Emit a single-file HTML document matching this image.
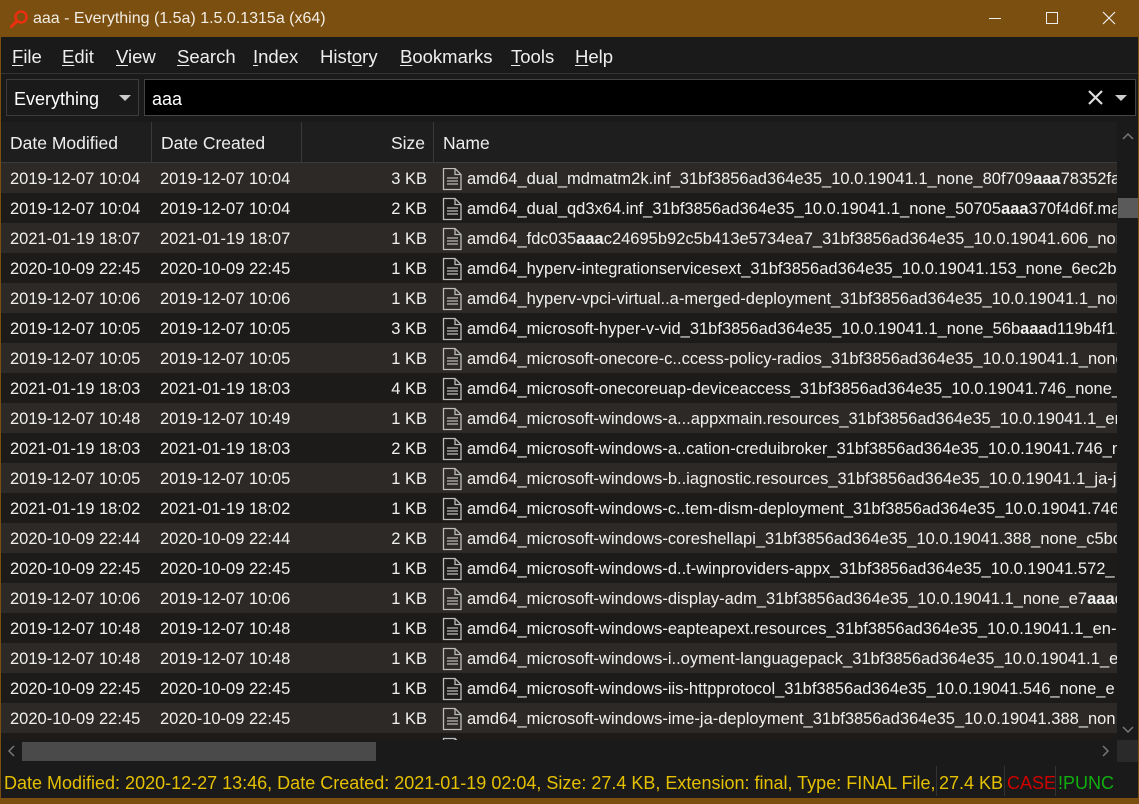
<!DOCTYPE html>
<html><head><meta charset="utf-8"><style>
*{margin:0;padding:0;box-sizing:border-box}
body{width:1139px;height:800px;background:#7a4f10;font-family:"Liberation Sans",sans-serif;color:#fff;overflow:hidden;position:relative}
.abs{position:absolute}
#title{left:0;top:0;width:1139px;height:37px;background:#7a4f10;font-size:16px;color:#f2ede4}
#menu{left:1px;top:37px;width:1137px;height:36px;background:#1a1a1a;font-size:18.5px;color:#eee}
#menu span{position:absolute;top:9px}
#menu u{text-decoration:underline;text-underline-offset:2px}
#bar{left:1px;top:73px;width:1137px;height:49px;background:#1a1a1a;border-top:1px solid #333}
#hdr{left:1px;top:122px;width:1116px;height:41px;background:#1e1e1e;font-size:17.5px;color:#eee;border-bottom:1px solid #3a3a3a}
#hdr div{position:absolute;top:0;height:40px;line-height:43px;border-right:1px solid #3a3a3a}
#list{left:1px;top:163px;width:1116px;height:577px;overflow:hidden;background:#1d1b19}
.r{position:relative;height:30px;font-size:16.5px;line-height:33px;white-space:nowrap;color:#f0f0f0}
.r:nth-child(odd){background:#2c2926}
.r span{position:absolute;top:0}
.c1{left:9px}.c2{left:159px}.c3{right:690px;text-align:right}
.c4{left:466px;width:650px;overflow:hidden}
#vs{left:1117px;top:122px;width:21px;height:618px;background:#1a1a1a}
#hs{left:1px;top:740px;width:1116px;height:22px;background:#1a1a1a}
#corner{left:1117px;top:740px;width:21px;height:22px;background:#2a2a2a}
#status{left:1px;top:762px;width:1137px;height:36px;background:#1a1a1a;font-size:18px;color:#e5c000;line-height:42px;white-space:nowrap}
</style></head><body>
<div id="title" class="abs">
<svg class="abs" style="left:9px;top:9px" width="20" height="20" viewBox="0 0 20 20"><circle cx="12" cy="8" r="5.5" fill="none" stroke="#e83010" stroke-width="2.6"/><path d="M8 12 L2.5 17.5" stroke="#e83010" stroke-width="3.2" stroke-linecap="round"/></svg>
<span class="abs" style="left:33px;top:10px">aaa - Everything (1.5a) 1.5.0.1315a (x64)</span>
<div class="abs" style="left:989px;top:18px;width:12px;height:1px;background:#eee"></div>
<div class="abs" style="left:1046px;top:12px;width:12px;height:12px;border:1px solid #eee"></div>
<svg class="abs" style="left:1102px;top:11px" width="14" height="14"><path d="M1 1L13 13M13 1L1 13" stroke="#eee" stroke-width="1.2"/></svg>
</div>
<div id="menu" class="abs">
<span style="left:11px"><u>F</u>ile</span><span style="left:61px"><u>E</u>dit</span><span style="left:115px"><u>V</u>iew</span><span style="left:176px"><u>S</u>earch</span><span style="left:252px"><u>I</u>ndex</span><span style="left:319px">Hist<u>o</u>ry</span><span style="left:399px"><u>B</u>ookmarks</span><span style="left:510px"><u>T</u>ools</span><span style="left:574px"><u>H</u>elp</span>
</div>
<div id="bar" class="abs">
<div class="abs" style="left:5px;top:5px;width:133px;height:37px;border:1px solid #3c3c3c;background:#1a1a1a;font-size:18px;line-height:38px;padding-left:7px">Everything</div>
<div class="abs" style="left:118px;top:21px;width:0;height:0;border-left:6px solid transparent;border-right:6px solid transparent;border-top:6px solid #ccc"></div>
<div class="abs" style="left:143px;top:5px;width:992px;height:37px;border:1px solid #444;background:#000;font-size:18px;line-height:38px;padding-left:7px">aaa</div>
<svg class="abs" style="left:1087px;top:16px" width="15" height="15"><path d="M1 1L14 14M14 1L1 14" stroke="#ddd" stroke-width="2.2"/></svg>
<div class="abs" style="left:1114px;top:21px;width:0;height:0;border-left:6px solid transparent;border-right:6px solid transparent;border-top:6px solid #ccc"></div>
</div>
<div id="hdr" class="abs">
<div style="left:0;width:151px;padding-left:9px">Date Modified</div>
<div style="left:151px;width:150px;padding-left:9px">Date Created</div>
<div style="left:301px;width:132px;text-align:right;padding-right:8px">Size</div>
<div style="left:433px;width:683px;padding-left:9px;border-right:none">Name</div>
</div>
<div id="list" class="abs">
<div class="r"><span class="c1">2019-12-07 10:04</span><span class="c2">2019-12-07 10:04</span><span class="c3">3 KB</span><span class="c4">amd64_dual_mdmatm2k.inf_31bf3856ad364e35_10.0.19041.1_none_80f709<b>aaa</b>78352fa.inf</span></div>
<div class="r"><span class="c1">2019-12-07 10:04</span><span class="c2">2019-12-07 10:04</span><span class="c3">2 KB</span><span class="c4">amd64_dual_qd3x64.inf_31bf3856ad364e35_10.0.19041.1_none_50705<b>aaa</b>370f4d6f.manifest</span></div>
<div class="r"><span class="c1">2021-01-19 18:07</span><span class="c2">2021-01-19 18:07</span><span class="c3">1 KB</span><span class="c4">amd64_fdc035<b>aaa</b>c24695b92c5b413e5734ea7_31bf3856ad364e35_10.0.19041.606_none_x</span></div>
<div class="r"><span class="c1">2020-10-09 22:45</span><span class="c2">2020-10-09 22:45</span><span class="c3">1 KB</span><span class="c4">amd64_hyperv-integrationservicesext_31bf3856ad364e35_10.0.19041.153_none_6ec2ba</span></div>
<div class="r"><span class="c1">2019-12-07 10:06</span><span class="c2">2019-12-07 10:06</span><span class="c3">1 KB</span><span class="c4">amd64_hyperv-vpci-virtual..a-merged-deployment_31bf3856ad364e35_10.0.19041.1_none</span></div>
<div class="r"><span class="c1">2019-12-07 10:05</span><span class="c2">2019-12-07 10:05</span><span class="c3">3 KB</span><span class="c4">amd64_microsoft-hyper-v-vid_31bf3856ad364e35_10.0.19041.1_none_56b<b>aaa</b>d119b4f1.m</span></div>
<div class="r"><span class="c1">2019-12-07 10:05</span><span class="c2">2019-12-07 10:05</span><span class="c3">1 KB</span><span class="c4">amd64_microsoft-onecore-c..ccess-policy-radios_31bf3856ad364e35_10.0.19041.1_none</span></div>
<div class="r"><span class="c1">2021-01-19 18:03</span><span class="c2">2021-01-19 18:03</span><span class="c3">4 KB</span><span class="c4">amd64_microsoft-onecoreuap-deviceaccess_31bf3856ad364e35_10.0.19041.746_none_</span></div>
<div class="r"><span class="c1">2019-12-07 10:48</span><span class="c2">2019-12-07 10:49</span><span class="c3">1 KB</span><span class="c4">amd64_microsoft-windows-a...appxmain.resources_31bf3856ad364e35_10.0.19041.1_en</span></div>
<div class="r"><span class="c1">2021-01-19 18:03</span><span class="c2">2021-01-19 18:03</span><span class="c3">2 KB</span><span class="c4">amd64_microsoft-windows-a..cation-creduibroker_31bf3856ad364e35_10.0.19041.746_n</span></div>
<div class="r"><span class="c1">2019-12-07 10:05</span><span class="c2">2019-12-07 10:05</span><span class="c3">1 KB</span><span class="c4">amd64_microsoft-windows-b..iagnostic.resources_31bf3856ad364e35_10.0.19041.1_ja-jp</span></div>
<div class="r"><span class="c1">2021-01-19 18:02</span><span class="c2">2021-01-19 18:02</span><span class="c3">1 KB</span><span class="c4">amd64_microsoft-windows-c..tem-dism-deployment_31bf3856ad364e35_10.0.19041.746</span></div>
<div class="r"><span class="c1">2020-10-09 22:44</span><span class="c2">2020-10-09 22:44</span><span class="c3">2 KB</span><span class="c4">amd64_microsoft-windows-coreshellapi_31bf3856ad364e35_10.0.19041.388_none_c5bc</span></div>
<div class="r"><span class="c1">2020-10-09 22:45</span><span class="c2">2020-10-09 22:45</span><span class="c3">1 KB</span><span class="c4">amd64_microsoft-windows-d..t-winproviders-appx_31bf3856ad364e35_10.0.19041.572_</span></div>
<div class="r"><span class="c1">2019-12-07 10:06</span><span class="c2">2019-12-07 10:06</span><span class="c3">1 KB</span><span class="c4">amd64_microsoft-windows-display-adm_31bf3856ad364e35_10.0.19041.1_none_e7<b>aaa</b>c</span></div>
<div class="r"><span class="c1">2019-12-07 10:48</span><span class="c2">2019-12-07 10:48</span><span class="c3">1 KB</span><span class="c4">amd64_microsoft-windows-eapteapext.resources_31bf3856ad364e35_10.0.19041.1_en-</span></div>
<div class="r"><span class="c1">2019-12-07 10:48</span><span class="c2">2019-12-07 10:48</span><span class="c3">1 KB</span><span class="c4">amd64_microsoft-windows-i..oyment-languagepack_31bf3856ad364e35_10.0.19041.1_e</span></div>
<div class="r"><span class="c1">2020-10-09 22:45</span><span class="c2">2020-10-09 22:45</span><span class="c3">1 KB</span><span class="c4">amd64_microsoft-windows-iis-httpprotocol_31bf3856ad364e35_10.0.19041.546_none_e</span></div>
<div class="r"><span class="c1">2020-10-09 22:45</span><span class="c2">2020-10-09 22:45</span><span class="c3">1 KB</span><span class="c4">amd64_microsoft-windows-ime-ja-deployment_31bf3856ad364e35_10.0.19041.388_non</span></div>
<div class="r"><span class="c1"></span></div>
</div>
<svg class="abs" style="left:442px;top:168px" width="22" height="572">
<defs><g id="f"><path d="M1.5 0.5H13L19 6.5V21.5H1.5Z" fill="none" stroke="#bbb" stroke-width="1.3"/><path d="M13 0.5V6.5H19" fill="none" stroke="#bbb" stroke-width="1.3"/><path d="M5 10H16M5 13H16M5 16H16" stroke="#bbb" stroke-width="1.3"/></g></defs>
<use href="#f" y="0"/><use href="#f" y="30"/><use href="#f" y="60"/><use href="#f" y="90"/><use href="#f" y="120"/><use href="#f" y="150"/><use href="#f" y="180"/><use href="#f" y="210"/><use href="#f" y="240"/><use href="#f" y="270"/><use href="#f" y="300"/><use href="#f" y="330"/><use href="#f" y="360"/><use href="#f" y="390"/><use href="#f" y="420"/><use href="#f" y="450"/><use href="#f" y="480"/><use href="#f" y="510"/><use href="#f" y="540"/><use href="#f" y="570"/>
</svg>
<div id="vs" class="abs">
<svg class="abs" style="left:5px;top:10px" width="12" height="8"><path d="M1 7L6 2L11 7" fill="none" stroke="#777" stroke-width="1.5"/></svg>
<div class="abs" style="left:1px;top:76px;width:20px;height:20px;background:#5a5a5a"></div>
<svg class="abs" style="left:5px;top:604px" width="12" height="8"><path d="M1 1L6 6L11 1" fill="none" stroke="#777" stroke-width="1.5"/></svg>
</div>
<div id="hs" class="abs">
<svg class="abs" style="left:6px;top:5px" width="8" height="12"><path d="M7 1L2 6L7 11" fill="none" stroke="#777" stroke-width="1.5"/></svg>
<div class="abs" style="left:21px;top:2px;width:354px;height:19px;background:#4a4a4a"></div>
<svg class="abs" style="left:1101px;top:5px" width="8" height="12"><path d="M1 1L6 6L1 11" fill="none" stroke="#777" stroke-width="1.5"/></svg>
</div>
<div id="corner" class="abs"></div>
<div id="status" class="abs">
<span class="abs" style="left:3px;width:932px;overflow:hidden">Date Modified: 2020-12-27 13:46, Date Created: 2021-01-19 02:04, Size: 27.4 KB, Extension: final, Type: FINAL File, I</span>
<div class="abs" style="left:935px;top:4px;width:1px;height:30px;background:#333"></div>
<span class="abs" style="left:938px">27.4 KB</span>
<div class="abs" style="left:1003px;top:4px;width:1px;height:30px;background:#333"></div>
<span class="abs" style="left:1006px;color:#d00000">CASE</span>
<div class="abs" style="left:1054px;top:4px;width:1px;height:30px;background:#333"></div>
<span class="abs" style="left:1057px;color:#10b010">!PUNC</span>
</div>
</body></html>
